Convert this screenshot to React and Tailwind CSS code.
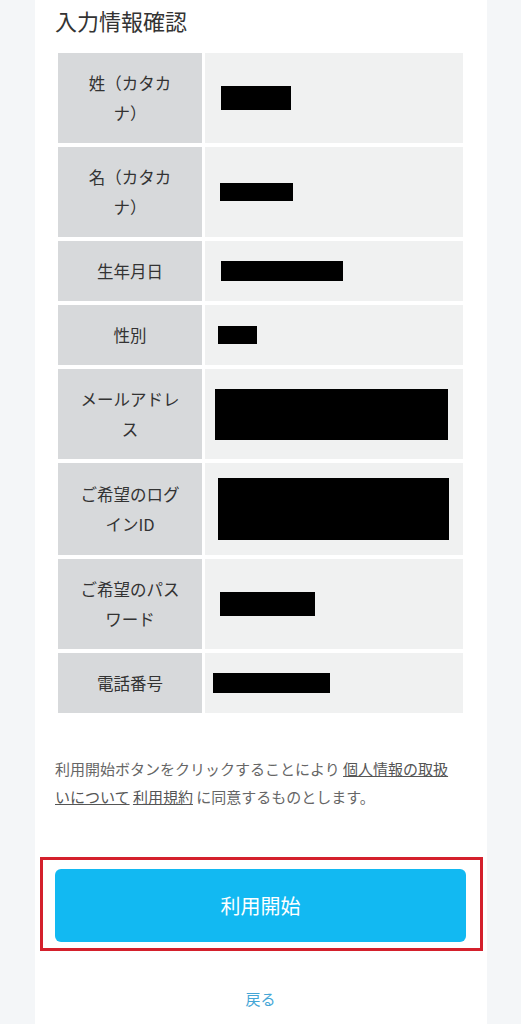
import React from "react";

const ROWS = [
    { label: "姓（カタカナ）", box: "ml-[16px] w-[70px] h-[24px]" },
    { label: "名（カタカナ）", box: "ml-[15px] w-[73px] h-[18px]" },
    { label: "生年月日", box: "ml-[16px] w-[122px] h-[20px]" },
    { label: "性別", box: "ml-[13px] w-[39px] h-[18px]" },
    { label: "メールアドレス", box: "ml-[10px] w-[233px] h-[51px]" },
    { label: "ご希望のログインID", box: "ml-[13px] w-[231px] h-[62px]" },
    { label: "ご希望のパスワード", box: "ml-[15px] w-[95px] h-[24px]" },
    { label: "電話番号", box: "ml-[8px] w-[117px] h-[20px]" },
];

export default function App() {
    return (
        <div
            className="min-h-screen bg-[#f4f6f8] text-[#333] [text-spacing-trim:space-all]"
            style={{ fontFamily: '"Noto Sans CJK JP", "Noto Sans", sans-serif' }}
        >
            <div className="min-h-screen mx-[35px] w-[452px] bg-white pl-[20px] pr-[21px] pb-[10px]">
                {/* Heading */}
                <h1 className="text-[22px] leading-[40px] text-[#333] font-normal">
                    入力情報確認
                </h1>

                {/* Confirmation table */}
                <table className="mt-[9px] w-full border-separate border-spacing-x-[3px] border-spacing-y-[4px]">
                    <tbody>
                        {ROWS.map((r) => (
                            <tr key={r.label}>
                                <th className="w-[144px] bg-[#d7d9db] px-[18px] py-[15px] text-center text-[16.5px] leading-[30px] font-normal text-[#333]">
                                    {r.label}
                                </th>
                                <td className="bg-[#f0f1f1] py-[15px] align-middle">
                                    <div className={`bg-black ${r.box}`} />
                                </td>
                            </tr>
                        ))}
                    </tbody>
                </table>

                {/* Agreement note */}
                <p className="mt-[38px] pr-[8px] text-[15px] leading-[28px] text-[#666]">
                    利用開始ボタンをクリックすることにより{" "}
                    <a className="underline text-[#555]">個人情報の取扱いについて</a>{" "}
                    <a className="underline text-[#555]">利用規約</a>{" "}
                    に同意するものとします。
                </p>

                {/* Submit button (highlighted) */}
                <div className="mt-[46px] -ml-[15px] -mr-[17px] border-[3px] border-[#d4202c] pl-[12px] pr-[14px] pt-[9px] pb-[6px]">
                    <button className="w-full h-[73px] rounded-[6px] bg-[#12b9f2] text-white text-[20px]">
                        利用開始
                    </button>
                </div>

                <div className="mt-[36px] text-center text-[15px] leading-[24px] text-[#45a6d6]">
                    戻る
                </div>
            </div>
        </div>
    );
}
